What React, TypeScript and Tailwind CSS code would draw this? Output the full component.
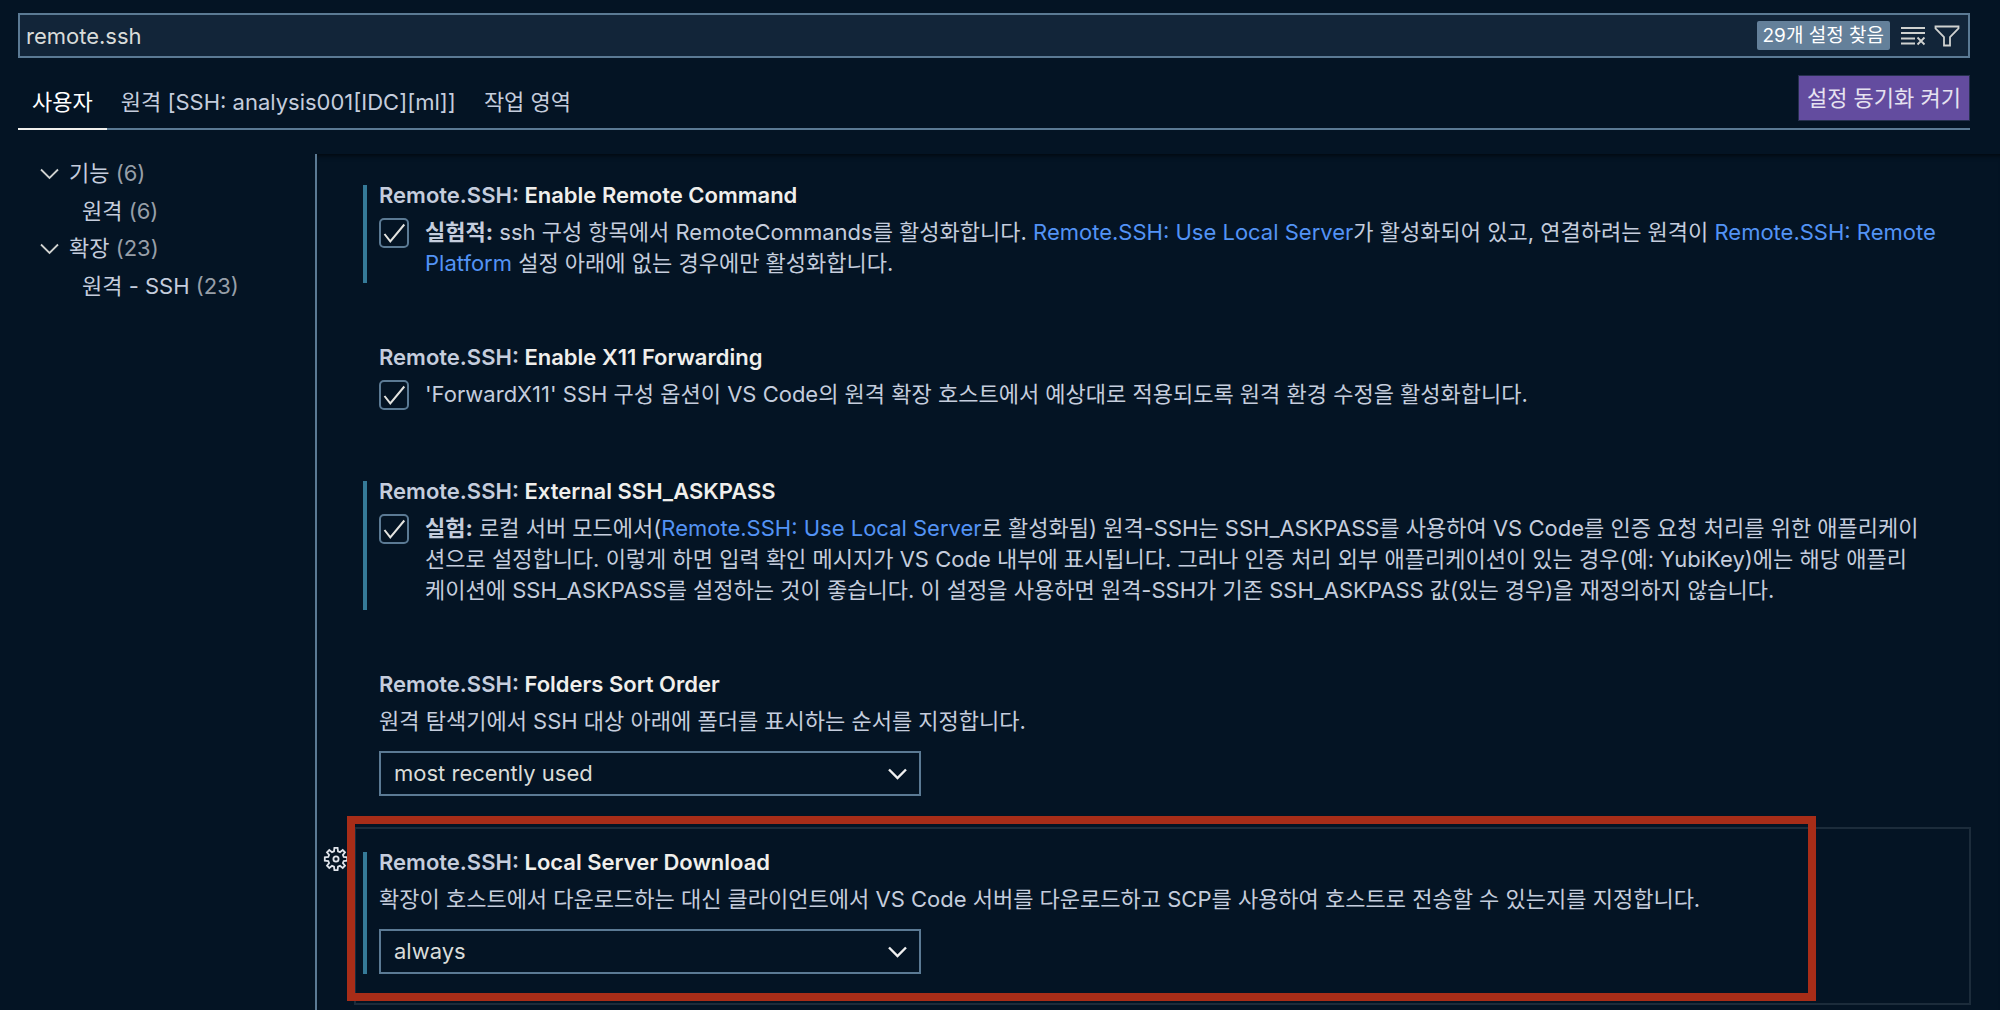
import type { ReactNode } from "react";

interface SettingProps {
  id: string;
  name: string;
  modified?: boolean;
  focused?: boolean;
  children: ReactNode;
}

interface CheckSettingProps extends Omit<SettingProps, "focused"> {}

interface SelectSettingProps extends SettingProps {
  options: string[];
}

interface IconProps {
  className?: string;
}

const ChevronIcon = ({ className }: IconProps) => (
  <svg viewBox="0 0 27 27" fill="none" stroke="currentColor" className={className}>
    <path d="M5 9.5 13.5 18 22 9.5" />
  </svg>
);

const CheckIcon = ({ className }: IconProps) => (
  <svg
    viewBox="0 0 30 30"
    fill="none"
    stroke="currentColor"
    strokeWidth="2"
    className={className}
  >
    <path d="M5.5 16 11.3 23.3 25.3 6.5" />
  </svg>
);

const ClearIcon = ({ className }: IconProps) => (
  <svg
    viewBox="0 0 26 26"
    fill="none"
    stroke="currentColor"
    strokeWidth="1.8"
    className={className}
  >
    <path d="M1 5h24M1 10h24M1 15.5h14M1 20.5h14" />
    <path d="m17.5 14.5 7 7M24.5 14.5l-7 7" />
  </svg>
);

const FilterIcon = ({ className }: IconProps) => (
  <svg
    viewBox="0 0 26 26"
    fill="none"
    stroke="currentColor"
    strokeWidth="1.8"
    className={className}
  >
    <path d="M1.5 3.5h23v2L16 14v8.5h-6V14L1.5 5.5z" />
  </svg>
);

const GearIcon = ({ className }: IconProps) => (
  <svg
    viewBox="0 0 26 26"
    fill="none"
    stroke="currentColor"
    strokeWidth="1.8"
    className={className}
  >
    <path d="M11 5.3 11.4 1.8h3.2L15 5.3l2 .8 2.7-2.1 2.3 2.3L19.900 9l.8 2 3.500.4v3.200l-3.500.4-.8 2 2.100 2.700-2.300 2.300L17 19.900l-2 .8-.4 3.500h-3.200L11 20.700l-2-.8L6.300 22 4 19.700 6.100 17l-.8-2-3.500-.4v-3.200l3.500-.4.8-2L4 6.300 6.300 4 9 6.100z" />
    <circle cx="13" cy="13" r="2.600" />
  </svg>
);

const SettingTitle = ({ id, name }: { id: string; name: string }) => (
  <label
    htmlFor={id}
    className="block w-fit leading-5 font-semibold text-[#c5cddd]"
  >
    Remote.SSH: <span className="text-[#f0efec]">{name}</span>
  </label>
);

const SettingLink = ({ children }: { children: ReactNode }) => (
  <a href="#" className="text-[#5393f5]">
    {children}
  </a>
);

const CheckSetting = ({ id, name, modified, children }: CheckSettingProps) => (
  <li className="pl-2 pt-6 pb-10">
    <div
      className={
        modified
          ? "border-l-4 border-[#357a98] pl-3"
          : "border-l-4 border-transparent pl-3"
      }
    >
      <SettingTitle id={id} name={name} />
      <div className="mt-3 flex min-h-[38px] gap-4 pb-1">
        <span className="relative mt-px size-[30px] shrink-0">
          <input
            id={id}
            type="checkbox"
            defaultChecked
            className="peer block size-full appearance-none rounded-[5px] border-2 border-[#5b7a94]"
          />
          <CheckIcon className="pointer-events-none absolute inset-0 hidden size-full text-[#e4e4e0] peer-checked:block" />
        </span>
        <p className="mr-6 flex-1">{children}</p>
      </div>
    </div>
  </li>
);

const SelectSetting = ({
  id,
  name,
  modified,
  focused,
  options,
  children,
}: SelectSettingProps) => (
  <li
    className={
      focused
        ? "relative pl-2 pt-6 pb-[30px] outline-2 -outline-offset-1 outline-[#1c2c3b]"
        : "relative pl-2 pt-6 pb-8"
    }
  >
    {focused && (
      <button
        type="button"
        aria-label="추가 작업"
        className="absolute top-[18px] -left-8 text-[#dfe3ea]"
      >
        <GearIcon className="size-[26px]" />
      </button>
    )}
    <div
      className={
        modified
          ? "border-l-4 border-[#357a98] pl-3"
          : "border-l-4 border-transparent pl-3"
      }
    >
      <SettingTitle id={id} name={name} />
      <p className="mt-3">{children}</p>
      <div className="relative mt-[14px] h-[45px] w-[542px]">
        <select
          id={id}
          className="size-full appearance-none border-2 border-[#5b7a94] bg-[#041424] px-[13px] text-[#d9dcd9]"
        >
          {options.map((option) => (
            <option key={option}>{option}</option>
          ))}
        </select>
        <ChevronIcon className="pointer-events-none absolute top-[9px] right-[10px] size-[27px] stroke-[2.4] text-[#f0f0f0]" />
      </div>
    </div>
    {focused && (
      <div className="pointer-events-none absolute -top-[12px] right-[154px] bottom-[3px] -left-2 border-8 border-[#a82d18]" />
    )}
  </li>
);

const TreeGroup = ({
  label,
  count,
  child,
}: {
  label: string;
  count: number;
  child: string;
}) => (
  <li>
    <div className="flex h-[37px] items-center gap-1.5">
      <ChevronIcon className="size-[27px] stroke-[1.8] text-[#d0d2d0]" />
      <span>
        {label} <span className="text-[#979fa8]">({count})</span>
      </span>
    </div>
    <div className="flex h-[38px] items-center pl-[46px]">
      <span>
        {child} <span className="text-[#979fa8]">({count})</span>
      </span>
    </div>
  </li>
);

export default function App() {
  return (
    <div className="flex min-h-screen flex-col bg-[#041424] pt-[13px] pl-[18px] font-['Inter','Noto_Sans_CJK_KR',sans-serif] text-[22px] leading-[31px] text-[#c5cddd]">
      {/* Search */}
      <header className="mr-[30px]">
        <div className="flex h-[45px] items-center border-2 border-[#5b7a94] bg-[#122539] pr-2 pl-1.5">
          <input
            type="text"
            aria-label="설정 검색"
            defaultValue="remote.ssh"
            className="min-w-0 flex-1 bg-transparent pt-px text-[#d9dcd9] outline-none"
          />
          <span className="mr-[10px] rounded-[2px] bg-[#64809a] px-1.5 text-[19px] leading-[29px] text-white">
            29개 설정 찾음
          </span>
          <button
            type="button"
            aria-label="설정 검색 입력 지우기"
            className="mr-2"
          >
            <ClearIcon className="size-[26px] text-[#d0d2d0]" />
          </button>
          <button type="button" aria-label="설정 필터링">
            <FilterIcon className="size-[26px] text-[#d0d2d0]" />
          </button>
        </div>

        {/* Scope tabs */}
        <div className="flex h-[72px] items-end justify-between border-b-2 border-[#5b7a94]">
          <nav className="-mb-0.5 flex">
            <button
              type="button"
              className="h-[45px] border-b-2 border-[#f0efec] px-3.5 pb-2 text-white"
            >
              사용자
            </button>
            <button type="button" className="h-[45px] px-3.5 pb-[10px]">
              원격 [SSH: analysis001[IDC][ml]]
            </button>
            <button type="button" className="h-[45px] px-3.5 pb-[10px]">
              작업 영역
            </button>
          </nav>
          <button
            type="button"
            className="mb-[7px] h-[46px] border border-[#26304f] bg-[#634c9f] px-2 text-[#e6e2f0]"
          >
            설정 동기화 켜기
          </button>
        </div>
      </header>

      {/* Tree + settings list */}
      <div className="mt-6 flex flex-1">
        <aside className="w-[297px] shrink-0 pt-px pl-[18px]">
          <ul>
            <TreeGroup label="기능" count={6} child="원격" />
            <TreeGroup label="확장" count={23} child="원격 - SSH" />
          </ul>
        </aside>

        <main className="flex-1 border-l-2 border-[#5b7a94] pt-[7px] pr-[30px] pl-[38px] shadow-[inset_0_6px_6px_-6px_#000]">
          <ul>
            <CheckSetting
              id="enable-remote-command"
              name="Enable Remote Command"
              modified
            >
              <b>실험적:</b> ssh 구성 항목에서 RemoteCommands를 활성화합니다.{" "}
              <SettingLink>Remote.SSH: Use Local Server</SettingLink>가
              활성화되어 있고, 연결하려는 원격이{" "}
              <SettingLink>Remote.SSH: Remote Platform</SettingLink> 설정 아래에
              없는 경우에만 활성화합니다.
            </CheckSetting>

            <CheckSetting id="enable-x11" name="Enable X11 Forwarding">
              'ForwardX11' SSH 구성 옵션이 VS Code의 원격 확장 호스트에서
              예상대로 적용되도록 원격 환경 수정을 활성화합니다.
            </CheckSetting>

            <CheckSetting
              id="external-askpass"
              name="External SSH_ASKPASS"
              modified
            >
              <b>실험:</b> 로컬 서버 모드에서(
              <SettingLink>Remote.SSH: Use Local Server</SettingLink>로
              활성화됨) 원격-SSH는 SSH_ASKPASS를 사용하여 VS Code를 인증 요청
              처리를 위한 애플리케이
              <br />
              션으로 설정합니다. 이렇게 하면 입력 확인 메시지가 VS Code 내부에
              표시됩니다. 그러나 인증 처리 외부 애플리케이션이 있는 경우(예:
              YubiKey)에는 해당 애플리
              <br />
              케이션에 SSH_ASKPASS를 설정하는 것이 좋습니다. 이 설정을 사용하면
              원격-SSH가 기존 SSH_ASKPASS 값(있는 경우)을 재정의하지 않습니다.
            </CheckSetting>

            <SelectSetting
              id="folders-sort-order"
              name="Folders Sort Order"
              options={["most recently used", "alphabetical"]}
            >
              원격 탐색기에서 SSH 대상 아래에 폴더를 표시하는 순서를 지정합니다.
            </SelectSetting>

            <SelectSetting
              id="local-server-download"
              name="Local Server Download"
              options={["always", "auto", "off"]}
              modified
              focused
            >
              확장이 호스트에서 다운로드하는 대신 클라이언트에서 VS Code 서버를
              다운로드하고 SCP를 사용하여 호스트로 전송할 수 있는지를
              지정합니다.
            </SelectSetting>
          </ul>
        </main>
      </div>
    </div>
  );
}
